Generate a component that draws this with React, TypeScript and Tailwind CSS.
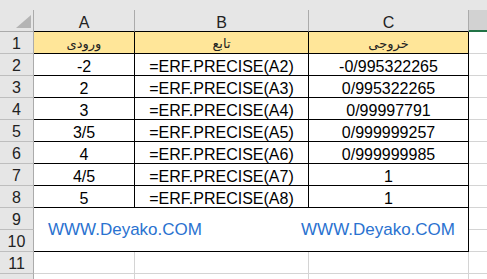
const ROWS: [string, string, string][] = [
  ['-2', '=ERF.PRECISE(A2)', '-0/995322265'],
  ['2', '=ERF.PRECISE(A3)', '0/995322265'],
  ['3', '=ERF.PRECISE(A4)', '0/99997791'],
  ['3/5', '=ERF.PRECISE(A5)', '0/999999257'],
  ['4', '=ERF.PRECISE(A6)', '0/999999985'],
  ['4/5', '=ERF.PRECISE(A7)', '1'],
  ['5', '=ERF.PRECISE(A8)', '1'],
];

const WIDTHS = ['w-[101px]', 'w-[174px]', 'w-[160px]'];

function RowHead({ n }: { n?: number }) {
  return (
    <div className="w-[34px] h-[22px] shrink-0 bg-[#e6e6e6] border-r border-b border-r-[#ababab] border-b-[#bebebe] text-center text-[16px] leading-[21px] pt-[1px] text-[#222]">
      {n}
    </div>
  );
}

function DataRow({ n, cells, yellow }: { n: number; cells: string[]; yellow?: boolean }) {
  return (
    <div className="flex h-[22px]">
      <RowHead n={n} />
      {cells.map((c, i) => (
        <div
          key={i}
          className={`${WIDTHS[i]} shrink-0 h-[22px] border-r border-b border-black flex items-end justify-center ${
            yellow ? 'bg-[#ffe699]' : 'bg-white'
          }`}
        >
          {yellow ? (
            <span dir="rtl" className="text-[13px] leading-4 pb-[1px] text-[#222]" style={{ fontFamily: '"DejaVu Sans", sans-serif' }}>
              {c}
            </span>
          ) : (
            <span className="text-[16px] leading-4 text-black">{c}</span>
          )}
        </div>
      ))}
      <div className="flex-1 h-[22px] border-b border-[#d4d4d4]" />
    </div>
  );
}

function EmptyRow({ n }: { n?: number }) {
  return (
    <div className="flex h-[22px]">
      <RowHead n={n} />
      {WIDTHS.map((w, i) => (
        <div key={i} className={`${w} shrink-0 h-[22px] border-r border-b border-[#d4d4d4]`} />
      ))}
      <div className="flex-1 h-[22px] border-b border-[#d4d4d4]" />
    </div>
  );
}

export default function App() {
  return (
    <div className="w-[487px] h-[279px] overflow-hidden bg-white" style={{ fontFamily: '"Liberation Sans", Arial, sans-serif' }}>
      {/* column headers */}
      <div className="bg-[#e6e6e6]">
        <div className="h-[10px]" />
        <div className="flex h-[22px]">
          <div className="w-[34px] shrink-0 border-r border-b border-[#ababab] flex items-end justify-end pr-[2px] pb-[3px]">
            <svg width="15" height="13" viewBox="0 0 15 13">
              <polygon points="15,0 15,13 0,13" fill="#b4b4b4" />
            </svg>
          </div>
          {['A', 'B', 'C'].map((l, i) => (
            <div key={l} className={`${WIDTHS[i]} shrink-0 border-r border-r-[#ababab] border-b border-b-black flex items-end justify-center`}>
              <span className="text-[16px] leading-4 text-[#222]">{l}</span>
            </div>
          ))}
          <div className="flex-1 bg-[#d2d2d2] border-b-2 border-[#217346]" />
        </div>
      </div>

      <DataRow n={1} cells={['ورودی', 'تابع', 'خروجی']} yellow />
      {ROWS.map((r, i) => (
        <DataRow key={i} n={i + 2} cells={r} />
      ))}

      {/* merged rows 9-10 */}
      <div className="flex h-[44px]">
        <div className="flex flex-col shrink-0">
          <RowHead n={9} />
          <RowHead n={10} />
        </div>
        <div className="w-[435px] shrink-0 h-[44px] border-r border-b border-black flex items-center justify-between pl-[14px] pr-[13px] text-[17px] text-[#2a72d0]">
          <span>WWW.Deyako.COM</span>
          <span>WWW.Deyako.COM</span>
        </div>
        <div className="flex-1 flex flex-col">
          <div className="h-[22px] border-b border-[#d4d4d4]" />
          <div className="h-[22px] border-b border-[#d4d4d4]" />
        </div>
      </div>

      <EmptyRow n={11} />
      {/* row 12: only its top edge is in view */}
      <EmptyRow />
    </div>
  );
}
